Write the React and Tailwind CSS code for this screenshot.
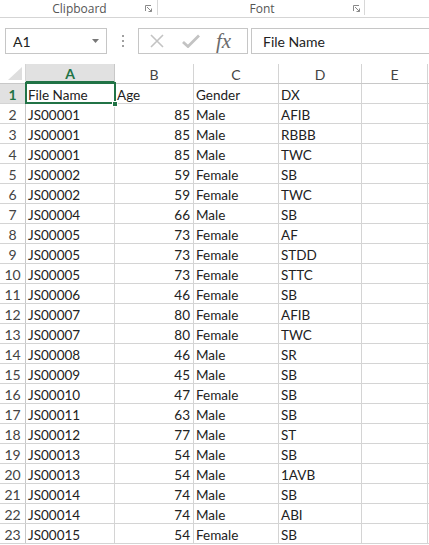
import React from "react";

const rows = [
  ["JS00001", 85, "Male", "AFIB"],
  ["JS00001", 85, "Male", "RBBB"],
  ["JS00001", 85, "Male", "TWC"],
  ["JS00002", 59, "Female", "SB"],
  ["JS00002", 59, "Female", "TWC"],
  ["JS00004", 66, "Male", "SB"],
  ["JS00005", 73, "Female", "AF"],
  ["JS00005", 73, "Female", "STDD"],
  ["JS00005", 73, "Female", "STTC"],
  ["JS00006", 46, "Female", "SB"],
  ["JS00007", 80, "Female", "AFIB"],
  ["JS00007", 80, "Female", "TWC"],
  ["JS00008", 46, "Male", "SR"],
  ["JS00009", 45, "Male", "SB"],
  ["JS00010", 47, "Female", "SB"],
  ["JS00011", 63, "Male", "SB"],
  ["JS00012", 77, "Male", "ST"],
  ["JS00013", 54, "Male", "SB"],
  ["JS00013", 54, "Male", "1AVB"],
  ["JS00014", 74, "Male", "SB"],
  ["JS00014", 74, "Male", "ABI"],
  ["JS00015", 54, "Female", "SB"],
];

const uiFont = { fontFamily: "'Open Sans', 'Noto Sans', sans-serif" };
const cellFont = { fontFamily: "Lato, 'Liberation Sans', sans-serif" };

const Launcher = () => (
  <svg width="7" height="7" viewBox="0 0 7 7" className="text-[#8a8a8a]">
    <path d="M0.5 6V0.5H6" fill="none" stroke="currentColor" />
    <path d="M2 2L6.5 6.5M3.5 6.5H6.5V3.5" fill="none" stroke="currentColor" />
  </svg>
);

const Cell = ({ w, right, children, className = "" }) => (
  <div
    className={`${w} shrink-0 h-full border-r border-[#d4d4d4] flex items-end leading-[14px] pb-[1px] overflow-hidden whitespace-nowrap ${
      right ? "justify-end pr-[3px]" : "pl-[2px]"
    } ${className}`}
  >
    {children}
  </div>
);

export default function App() {
  return (
    <div className="w-[429px] h-[545px] overflow-hidden bg-white text-[#222]">
      {/* ribbon group labels */}
      <div className="h-[18px] border-b border-[#d5d5d5] flex text-[12px] text-[#555]" style={uiFont}>
        <div className="w-[158px] relative border-r border-[#d8d8d8] h-[15px] flex justify-center items-start leading-[18px]">
          <span className="pl-[2px]">Clipboard</span>
          <div className="absolute left-[145px] top-[5px]"><Launcher /></div>
        </div>
        <div className="w-[207px] relative border-r border-[#d8d8d8] h-[15px] flex justify-center items-start leading-[18px]">
          <span className="pl-[2px]">Font</span>
          <div className="absolute left-[195px] top-[5px]"><Launcher /></div>
        </div>
      </div>

      {/* formula bar */}
      <div className="h-[46px] flex items-start pt-[10px] pl-[5px]">
        <div className="w-[102px] h-[26px] border border-[#c6c6c6] flex items-center justify-between pl-[7px] pr-[7px] text-[14px]" style={cellFont}>
          <span>A1</span>
          <svg width="7" height="4" viewBox="0 0 7 4"><path d="M0 0H7L3.5 4Z" fill="#777" /></svg>
        </div>
        <div className="w-[31px] h-[26px] flex flex-col items-center justify-center gap-[3px]">
          <span className="w-[2px] h-[2px] bg-[#a0a0a0]" />
          <span className="w-[2px] h-[2px] bg-[#a0a0a0]" />
          <span className="w-[2px] h-[2px] bg-[#a0a0a0]" />
        </div>
        <div className="w-[110px] h-[26px] border border-[#c6c6c6] flex items-center">
          <svg width="16" height="16" viewBox="0 0 16 16" className="ml-[10px]">
            <path d="M2 2L14 14M14 2L2 14" stroke="#c3c3c3" strokeWidth="1.6" fill="none" />
          </svg>
          <svg width="18" height="14" viewBox="0 0 18 14" className="ml-[17px]">
            <path d="M1 8L6 12.5L17 1.5" stroke="#c3c3c3" strokeWidth="2.8" fill="none" />
          </svg>
          <span
            className="ml-[16px] text-[21px] italic text-[#6b6b6b] leading-none"
            style={{ fontFamily: "'Liberation Serif', 'DejaVu Serif', serif" }}
          >
            fx
          </span>
        </div>
        <div className="ml-[3px] flex-1 h-[26px] border border-r-0 border-[#c6c6c6] flex items-center pl-[11px] text-[14px]" style={cellFont}>
          File Name
        </div>
      </div>

      {/* grid */}
      <div className="text-[13.5px]" style={cellFont}>
        <div className="h-[20px] flex border-b border-[#c8c8c8] text-[#444] text-[14px]">
          <div className="w-[26px] shrink-0 h-full border-r border-[#d4d4d4] relative">
            <svg width="14" height="13" viewBox="0 0 14 13" className="absolute right-[3px] bottom-[3px]">
              <path d="M14 0V13H0Z" fill="#dedede" />
            </svg>
          </div>
          <div className="w-[89px] shrink-0 h-full bg-[#e1e1e1] border-r border-[#c8c8c8] border-b-2 border-b-[#217346] flex items-center justify-center pt-[1px] font-bold text-[#217346]">A</div>
          <div className="w-[79px] shrink-0 h-full border-r border-[#d4d4d4] flex items-center justify-center pt-[1px]">B</div>
          <div className="w-[85px] shrink-0 h-full border-r border-[#d4d4d4] flex items-center justify-center pt-[1px]">C</div>
          <div className="w-[83px] shrink-0 h-full border-r border-[#d4d4d4] flex items-center justify-center pt-[1px]">D</div>
          <div className="w-[66px] shrink-0 h-full border-r border-[#d4d4d4] flex items-center justify-center pt-[1px]">E</div>
        </div>

        <div className="h-[20px] flex border-b border-[#d4d4d4]">
          <div className="w-[26px] shrink-0 h-full bg-[#e1e1e1] border-r border-[#c8c8c8] flex items-center justify-center pt-[1px] font-bold text-[#217346] text-[14px]">1</div>
          <div className="w-[89px] shrink-0 h-full border-r border-[#d4d4d4] relative flex items-end leading-[14px] pb-[1px] pl-[2px] whitespace-nowrap">
            File Name
            <div className="absolute -left-[1px] -top-[2px] w-[91px] h-[22px] border-2 border-[#217346]" />
            <div className="absolute -right-[4px] -bottom-[4px] w-[6px] h-[6px] bg-[#217346] border border-white z-10" />
          </div>
          <Cell w="w-[79px]">Age</Cell>
          <Cell w="w-[85px]">Gender</Cell>
          <Cell w="w-[83px]">DX</Cell>
          <Cell w="w-[66px]" />
        </div>

        {rows.map((r, i) => (
          <div key={i} className="h-[20px] flex border-b border-[#d4d4d4]">
            <div className="w-[26px] shrink-0 h-full border-r border-[#c8c8c8] flex items-center justify-center pt-[1px] text-[#444] text-[14px]">{i + 2}</div>
            <Cell w="w-[89px]">{r[0]}</Cell>
            <Cell w="w-[79px]" right>{r[1]}</Cell>
            <Cell w="w-[85px]">{r[2]}</Cell>
            <Cell w="w-[83px]">{r[3]}</Cell>
            <Cell w="w-[66px]" />
          </div>
        ))}
      </div>
    </div>
  );
}
